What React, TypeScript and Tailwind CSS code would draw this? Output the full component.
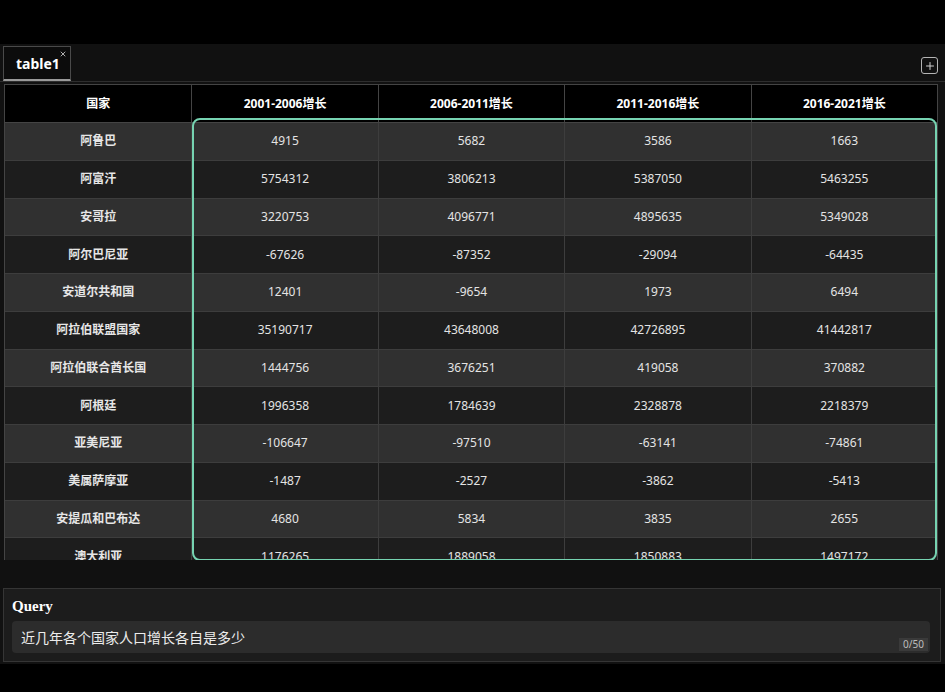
import { Plus, X } from "lucide-react";

const headers = ["国家", "2001-2006增长", "2006-2011增长", "2011-2016增长", "2016-2021增长"];

const rows: [string, number, number, number, number][] = [
  ["阿鲁巴", 4915, 5682, 3586, 1663],
  ["阿富汗", 5754312, 3806213, 5387050, 5463255],
  ["安哥拉", 3220753, 4096771, 4895635, 5349028],
  ["阿尔巴尼亚", -67626, -87352, -29094, -64435],
  ["安道尔共和国", 12401, -9654, 1973, 6494],
  ["阿拉伯联盟国家", 35190717, 43648008, 42726895, 41442817],
  ["阿拉伯联合酋长国", 1444756, 3676251, 419058, 370882],
  ["阿根廷", 1996358, 1784639, 2328878, 2218379],
  ["亚美尼亚", -106647, -97510, -63141, -74861],
  ["美属萨摩亚", -1487, -2527, -3862, -5413],
  ["安提瓜和巴布达", 4680, 5834, 3835, 2655],
  ["澳大利亚", 1176265, 1889058, 1850883, 1497172],
];

const font = { fontFamily: '"Noto Sans", "Noto Sans CJK SC", sans-serif' };

export default function App() {
  return (
    <div className="w-[945px] h-[692px] bg-black overflow-hidden" style={font}>
      <div className="h-[44px]" />
      <div className="bg-[#111111] pb-[2px]">
        {/* tab bar */}
        <div className="h-[38px] flex items-end justify-between pl-[3px] pr-[7px] border-b border-[#2e2e2e]">
          <div className="relative h-[35px] w-[68px] border border-[#4a4a4a] border-b-2 border-b-[#9a9a9a] bg-[#0c0c0c] flex items-center pl-[12px]">
            <span className="text-[14px] font-bold text-white">table1</span>
            <X className="absolute top-[3px] right-[3px] w-[8px] h-[8px] text-[#cfcfcf]" strokeWidth={2.5} />
          </div>
          <div className="mb-[7px] w-[17px] h-[17px] border border-[#b5b5b5] rounded-[3px] flex items-center justify-center">
            <Plus className="w-[12px] h-[12px] text-[#d0d0d0]" strokeWidth={2} />
          </div>
        </div>

        {/* table */}
        <div className="relative mt-[2px] ml-[4px] w-[934px] h-[476px] overflow-hidden border-l border-r border-t border-[#444]">
          <div className="grid grid-cols-5 h-[38px] bg-black border-b border-[#444]">
            {headers.map((h, i) => (
              <div
                key={h}
                className={`flex items-center justify-center text-[12px] font-bold text-white ${i > 0 ? "border-l border-[#444]" : ""}`}
              >
                {h}
              </div>
            ))}
          </div>
          {rows.map((r, ri) => (
            <div
              key={r[0]}
              className={`grid grid-cols-5 h-[37.75px] border-b border-[#3d3d3d] ${ri % 2 === 0 ? "bg-[#303030]" : "bg-[#1d1d1d]"}`}
            >
              {r.map((c, ci) => (
                <div
                  key={ci}
                  className={`flex items-center justify-center text-[12px] ${ci === 0 ? "font-bold text-[#e6e6e6]" : "text-[#e4e4e4] border-l border-[#3d3d3d]"}`}
                >
                  {c}
                </div>
              ))}
            </div>
          ))}
          <div className="absolute left-[187px] top-[33px] w-[745px] h-[443px] rounded-[8px] border-2 border-[#76d3b1] pointer-events-none" />
        </div>

        {/* query */}
        <div className="mt-[28px] ml-[3px] w-[938px] h-[74px] bg-[#1c1c1c] border border-[#353535] px-[8px] pt-[8px]">
          <div className="text-[15px] font-bold text-white leading-[18px]" style={{ fontFamily: '"Liberation Serif", serif' }}>
            Query
          </div>
          <div className="relative mt-[6px] w-[918px] h-[32px] bg-[#2c2c2c] rounded-[4px] flex items-center pl-[9px]">
            <span className="text-[14px] text-[#ececec]" style={{ fontFamily: '"Noto Sans CJK SC", sans-serif' }}>
              近几年各个国家人口增长各自是多少
            </span>
            <span className="absolute right-[2px] bottom-[2px] bg-[#3a3a3a] text-[#bdbdbd] text-[10px] leading-[13px] px-[4px]">
              0/50
            </span>
          </div>
        </div>
      </div>
    </div>
  );
}
